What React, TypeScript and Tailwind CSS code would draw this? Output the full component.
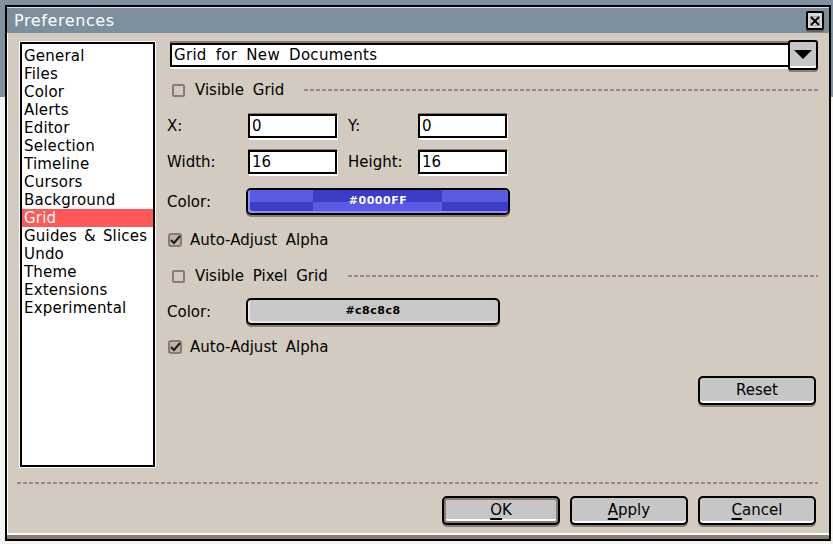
import React from "react"

const sections = [
  "General",
  "Files",
  "Color",
  "Alerts",
  "Editor",
  "Selection",
  "Timeline",
  "Cursors",
  "Background",
  "Grid",
  "Guides & Slices",
  "Undo",
  "Theme",
  "Extensions",
  "Experimental",
]

const font = { fontFamily: '"DejaVu Sans", "Liberation Sans", sans-serif' }

function Dashed({ className = "" }: { className?: string }) {
  return (
    <div
      className={
        "h-[2px] bg-[repeating-linear-gradient(90deg,#9a8a80_0_4px,transparent_4px_6px)] " + className
      }
    />
  )
}

function CheckBox({ checked }: { checked?: boolean }) {
  if (checked) {
    return (
      <svg width="14" height="14" viewBox="0 0 14 14" className="shrink-0">
        <rect x="1" y="1" width="12" height="12" rx="2" fill="#bfb4aa" stroke="#8b7b70" strokeWidth="2" />
        <path d="M3 7 L6 10 L12 3" fill="none" stroke="#1a1a1a" strokeWidth="2" />
      </svg>
    )
  }
  return <div className="w-[13px] h-[13px] shrink-0 rounded-[2px] border-2 border-[#8b7b70]" />
}

function Field({ value, w = "w-[89px]" }: { value: string; w?: string }) {
  return (
    <div
      className={`${w} h-[24px] bg-white border-2 border-black flex items-center px-[2px] text-[15px] leading-none shadow-[0_-1px_0_#8b7b70,1px_2px_0_#fff]`}
    >
      {value}
    </div>
  )
}

function Button({ label, u, focus, w = "w-[118px]" }: { label: string; u?: number; focus?: boolean; w?: string }) {
  return (
    <div
      className={`${w} h-[29px] rounded-[5px] border-2 border-black bg-[#c6c6c6] flex items-center justify-center text-[15px] leading-none ${
        focus
          ? "shadow-[inset_0_0_0_2px_#8b7b70,0_2px_0_#8b7b70,inset_0_-4px_0_#fff]"
          : "shadow-[inset_0_-2px_0_#fff,0_2px_0_#8b7b70]"
      }`}
    >
      {u === undefined ? (
        label
      ) : (
        <span>
          <span className="underline decoration-2 underline-offset-[3px]">{label[u]}</span>
          {label.slice(u + 1)}
        </span>
      )}
    </div>
  )
}

export default function App() {
  return (
    <div
      className="w-[833px] h-[544px] overflow-hidden bg-[linear-gradient(#7e939f_0_97px,#f3f3f3_97px)] pl-[5px] pt-[5px] text-black"
      style={font}
    >
      <div className="w-[826px] h-[536px] border-2 border-black bg-[#d3cbbf] flex flex-col shadow-[inset_0_-4px_0_#8b7b70,inset_0_-6px_0_#fff,inset_1px_0_0_#fff]">
        {/* title bar */}
        <div className="h-[26px] bg-[#7b8f9c] border-t border-[#cfe0ea] flex items-center justify-between pl-[7px] pr-[5px]">
          <span className="text-white text-[16px] tracking-[0.6px] mt-[1px]">Preferences</span>
          <div className="w-[18px] h-[19px] bg-[#d8d8d8] border-2 border-black rounded-[2px] flex items-center justify-center shadow-[0_2px_0_#6b5f58]">
            <svg width="10" height="10" viewBox="0 0 10 10">
              <path d="M1 1 L9 9 M9 1 L1 9" stroke="#000" strokeWidth="2" />
              <rect x="0" y="0" width="10" height="10" fill="none" stroke="#777" strokeWidth="1" />
            </svg>
          </div>
        </div>

        {/* body */}
        <div className="flex pl-[13px] pt-[7px] pr-[11px]">
          <div className="mt-[2px] w-[135px] h-[425px] bg-white border-2 border-black pt-[3px] shadow-[0_0_0_1px_#fff] text-[15px]">
            {sections.map((s) => (
              <div
                key={s}
                className={`h-[18px] leading-[18px] pl-[2px] tracking-[0.2px] [word-spacing:2px] whitespace-nowrap ${
                  s === "Grid" ? "bg-[#ff5858] text-white" : ""
                }`}
              >
                {s}
              </div>
            ))}
          </div>

          <div className="ml-[12px] flex-1 flex flex-col text-[15px]">
            <div className="h-[30px] flex items-center">
              <div className="ml-[3px] flex-1 h-[24px] bg-white border-2 border-black flex items-center px-[2px] [word-spacing:4px] tracking-[0.3px] shadow-[0_-2px_0_#8b7b70,0_2px_0_#fff]">
                Grid for New Documents
              </div>
              <div className="-ml-[2px] w-[30px] h-[30px] rounded-[3px] border-2 border-black bg-[#c6c6c6] flex items-center justify-center shadow-[inset_0_-2px_0_#fff,0_2px_0_#8b7b70]">
                <svg width="18" height="10" viewBox="0 0 18 10">
                  <path d="M0 0 H18 L9 9 Z" fill="#000" />
                </svg>
              </div>
            </div>

            <div className="mt-[10px] h-[20px] flex items-center pl-[5px]">
              <CheckBox />
              <span className="ml-[10px] [word-spacing:4px] mt-[1px]">Visible Grid</span>
              <Dashed className="ml-[20px] flex-1" />
            </div>

            <div className="mt-[14px] flex items-center">
              <span className="w-[81px] mt-[1px]">X:</span>
              <Field value="0" />
              <span className="ml-[11px] w-[70px] mt-[1px]">Y:</span>
              <Field value="0" />
            </div>

            <div className="mt-[12px] flex items-center">
              <span className="w-[81px] mt-[1px]">Width:</span>
              <Field value="16" />
              <span className="ml-[11px] w-[70px] mt-[1px]">Height:</span>
              <Field value="16" />
            </div>

            <div className="mt-[14px] flex items-center">
              <span className="w-[79px] mt-[1px]">Color:</span>
              <div className="relative w-[264px] h-[27px] rounded-[5px] border-2 border-black overflow-hidden shadow-[0_2px_0_#8b7b70]">
                <div className="flex h-1/2">
                  <div className="w-[65px] bg-[#5a5ae4]" />
                  <div className="flex-1 bg-[#3c3cc6]" />
                  <div className="w-[66px] bg-[#5a5ae4]" />
                </div>
                <div className="flex h-1/2">
                  <div className="w-[65px] bg-[#3c3cc6]" />
                  <div className="flex-1 bg-[#5a5ae4]" />
                  <div className="w-[66px] bg-[#3c3cc6]" />
                </div>
                <div className="absolute inset-0 rounded-[3px] shadow-[inset_2px_-2px_0_#8f8ff0]" />
                <div className="absolute inset-0 flex items-center justify-center text-white text-[11px] font-bold tracking-[0.5px]">
                  #0000FF
                </div>
              </div>
            </div>

            <div className="mt-[15px] h-[20px] flex items-center pl-[1px]">
              <CheckBox checked />
              <span className="ml-[8px] [word-spacing:4px] mt-[1px]">Auto-Adjust Alpha</span>
            </div>

            <div className="mt-[16px] h-[20px] flex items-center pl-[5px]">
              <CheckBox />
              <span className="ml-[10px] [word-spacing:4px] mt-[1px]">Visible Pixel Grid</span>
              <Dashed className="ml-[20px] flex-1" />
            </div>

            <div className="mt-[12px] flex items-center">
              <span className="w-[79px] mt-[1px]">Color:</span>
              <div className="w-[254px] h-[27px] rounded-[5px] border-2 border-black bg-[#c8c8c8] flex items-center justify-center text-[11px] font-bold tracking-[0.5px] shadow-[inset_2px_-2px_0_#e6e6e6,0_2px_0_#8b7b70]">
                #c8c8c8
              </div>
            </div>

            <div className="mt-[12px] h-[20px] flex items-center pl-[1px]">
              <CheckBox checked />
              <span className="ml-[8px] [word-spacing:4px] mt-[1px]">Auto-Adjust Alpha</span>
            </div>

            <div className="mt-[19px] flex justify-end pr-[2px]">
              <Button label="Reset" />
            </div>
          </div>
        </div>

        <Dashed className="mt-[15px] ml-[10px] mr-[11px]" />

        <div className="mt-[12px] flex justify-end gap-[10px] pr-[13px]">
          <Button label="OK" u={0} focus />
          <Button label="Apply" u={0} />
          <Button label="Cancel" u={0} />
        </div>
      </div>
    </div>
  )
}
